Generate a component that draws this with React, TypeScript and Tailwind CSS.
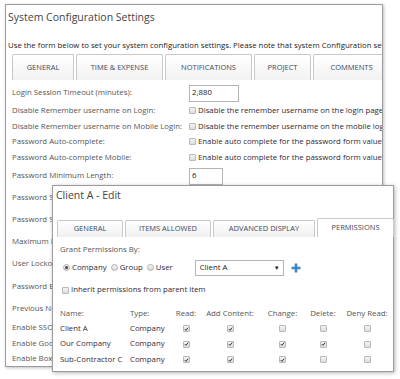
import React from "react";

const font = { fontFamily: '"Open Sans", "Noto Sans", sans-serif' };

function Check({ checked = false }: { checked?: boolean }) {
  return (
    <span className="inline-flex h-[7px] w-[7px] shrink-0 items-center justify-center rounded-[1px] border border-[#b8b8b8] bg-gradient-to-b from-[#f4f4f4] to-[#dcdcdc]">
      {checked && (
        <svg width="6" height="6" viewBox="0 0 6 6">
          <path d="M1 3.2 L2.4 4.6 L5 1.3" fill="none" stroke="#333" strokeWidth="1.2" />
        </svg>
      )}
    </span>
  );
}

function Radio({ checked = false }: { checked?: boolean }) {
  return (
    <span className="inline-flex h-[7px] w-[7px] shrink-0 items-center justify-center rounded-full border border-[#b0b0b0] bg-gradient-to-b from-[#f4f4f4] to-[#dadada]">
      {checked && <span className="h-[3px] w-[3px] rounded-full bg-[#444]" />}
    </span>
  );
}

function BackRow({ label, h, children }: { label: string; h: string; children?: React.ReactNode }) {
  return (
    <div className={`flex items-center ${h}`}>
      <div className="w-[177px] shrink-0 text-[#555]">{label}</div>
      <div className="flex items-center">{children}</div>
    </div>
  );
}

function CheckText({ text }: { text: string }) {
  return (
    <div className="flex items-center gap-[2px] whitespace-nowrap text-[#2f2834]">
      <Check />
      <span>{text}</span>
    </div>
  );
}

function Tab({ label, w, active = false }: { label: string; w: string; active?: boolean }) {
  return (
    <div
      className={`flex shrink-0 items-center justify-center rounded-t-[2px] border border-b-0 border-[#c8c8c8] text-[#3c4a60] ${w} ${
        active ? "h-[19px] bg-white" : "h-[17px] bg-gradient-to-b from-[#ffffff] to-[#f0f0f0]"
      }`}
    >
      {label}
    </div>
  );
}

function BackTab({ label, w }: { label: string; w: string }) {
  return (
    <div
      className={`flex h-[26px] shrink-0 items-center justify-center rounded-t-[2px] border border-b-0 border-[#c8c8c8] bg-gradient-to-b from-[#ffffff] to-[#f2f2f2] text-[#3c4a60] ${w}`}
    >
      {label}
    </div>
  );
}

const rows = [
  { name: "Client A", c: [true, true, false, false, false] },
  { name: "Our Company", c: [true, true, true, true, false] },
  { name: "Sub-Contractor C", c: [true, true, true, false, false] },
];

export default function App() {
  return (
    <div className="relative h-[379px] w-[400px] overflow-hidden bg-white text-[7.8px] leading-none" style={font}>
      {/* Back panel */}
      <div className="ml-[5px] mt-[4px] flex h-[363px] w-[378px] flex-col overflow-hidden border border-[#9c9c9c] bg-white shadow-[1px_1px_3px_rgba(0,0,0,0.25)]">
        <div className="flex h-[23px] items-center whitespace-nowrap pl-[2px] pt-[2px] text-[10.5px] text-[#444]">
          System Configuration Settings
        </div>
        <div className="flex h-[26px] items-end whitespace-nowrap pb-[1px] pl-[2px] text-[#222]">
          Use the form below to set your system configuration settings. Please note that system Configuration settings apply to all users.
        </div>
        <div className="ml-[6px] mt-[3px] flex gap-[2px] whitespace-nowrap text-[7.5px]">
          <BackTab label="GENERAL" w="w-[62px]" />
          <BackTab label="TIME & EXPENSE" w="w-[87px]" />
          <BackTab label="NOTIFICATIONS" w="w-[87px]" />
          <BackTab label="PROJECT" w="w-[57px]" />
          <BackTab label="COMMENTS" w="w-[77px]" />
        </div>
        <div className="flex flex-col whitespace-nowrap pl-[6px] pt-[3px]">
          <BackRow label="Login Session Timeout (minutes):" h="h-[20px]">
            <div className="flex h-[17px] w-[50px] items-center border border-[#b5b5b5] pl-[2px] text-[#222]">2,880</div>
          </BackRow>
          <BackRow label="Disable Remember username on Login:" h="h-[16px]">
            <CheckText text="Disable the remember username on the login page" />
          </BackRow>
          <BackRow label="Disable Remember username on Mobile Login:" h="h-[15px]">
            <CheckText text="Disable the remember username on the mobile login page" />
          </BackRow>
          <BackRow label="Password Auto-complete:" h="h-[16px]">
            <CheckText text="Enable auto complete for the password form value" />
          </BackRow>
          <BackRow label="Password Auto-complete Mobile:" h="h-[15px]">
            <CheckText text="Enable auto complete for the password form value" />
          </BackRow>
          <BackRow label="Password Minimum Length:" h="h-[22px]">
            <div className="flex h-[17px] w-[34px] items-center border border-[#b5b5b5] pl-[2px] text-[#222]">6</div>
          </BackRow>
          <BackRow label="Password Strength:" h="h-[22px]" />
          <BackRow label="Password Special Characters:" h="h-[22px]" />
          <BackRow label="Maximum Login Attempts:" h="h-[22px]" />
          <BackRow label="User Lockout Duration:" h="h-[22px]" />
          <BackRow label="Password Expiration (days):" h="h-[23px]" />
          <BackRow label="Previous Number of Passwords:" h="h-[22px]" />
          <BackRow label="Enable SSO:" h="h-[16px]" />
          <BackRow label="Enable Google Login:" h="h-[15px]" />
          <BackRow label="Enable Box Integration:" h="h-[15px]" />
        </div>
      </div>

      {/* Front panel */}
      <div className="absolute left-[52px] top-[185px] flex h-[187px] w-[342px] flex-col border border-[#9c9c9c] bg-white shadow-[1px_1px_4px_rgba(0,0,0,0.3)]">
        <div className="flex h-[18px] items-center whitespace-nowrap pl-[3px] text-[10.5px] text-[#444]">Client A - Edit</div>
        <div className="ml-[4px] mt-[14px] flex h-[19px] items-end gap-[2px] whitespace-nowrap text-[7.5px]">
          <Tab label="GENERAL" w="w-[66px]" />
          <Tab label="ITEMS ALLOWED" w="w-[86px]" />
          <Tab label="ADVANCED DISPLAY" w="w-[102px]" />
          <Tab label="PERMISSIONS" w="w-[77px]" active />
        </div>
        <div className="flex flex-col whitespace-nowrap pl-[7px]">
          <div className="flex h-[26px] items-center text-[#555]">Grant Permissions By:</div>
          <div className="flex h-[9px] items-center">
            <div className="flex items-center gap-[2px] pl-[3px] text-[#2f2834]">
              <Radio checked />
              <span>Company</span>
            </div>
            <div className="ml-[4px] flex items-center gap-[2px] text-[#2f2834]">
              <Radio />
              <span>Group</span>
            </div>
            <div className="ml-[4px] flex items-center gap-[2px] text-[#2f2834]">
              <Radio />
              <span>User</span>
            </div>
            <div className="ml-[22px] flex h-[16px] w-[89px] items-center justify-between border border-[#b5b5b5] pl-[4px] pr-[3px] text-[#222]">
              <span>Client A</span>
              <span className="text-[6px]">▼</span>
            </div>
            <svg className="ml-[7px]" width="10" height="10" viewBox="0 0 10 10">
              <path d="M5 0.5 V9.5 M0.5 5 H9.5" stroke="#3b86c6" strokeWidth="2.6" />
            </svg>
          </div>
          <div className="mt-[13px] flex h-[10px] items-center gap-[2px] pl-[2px] text-[#2f2834]">
            <Check />
            <span>Inherit permissions from parent item</span>
          </div>
          <div className="mt-[12px] grid grid-cols-[70px_42px_28px_60px_45px_36px_52px] items-center">
            <div className="flex h-[14px] items-center text-[#555]">Name:</div>
            <div className="text-[#555]">Type:</div>
            <div className="text-center text-[#555]">Read:</div>
            <div className="text-center text-[#555]">Add Content:</div>
            <div className="text-center text-[#555]">Change:</div>
            <div className="text-center text-[#555]">Delete:</div>
            <div className="text-center text-[#555]">Deny Read:</div>
            {rows.map((r) => (
              <React.Fragment key={r.name}>
                <div className="flex h-[15.5px] items-center text-[#3a2838]">{r.name}</div>
                <div className="text-[#3a2838]">Company</div>
                {r.c.map((v, i) => (
                  <div key={i} className="flex justify-center">
                    <Check checked={v} />
                  </div>
                ))}
              </React.Fragment>
            ))}
          </div>
        </div>
      </div>
    </div>
  );
}
